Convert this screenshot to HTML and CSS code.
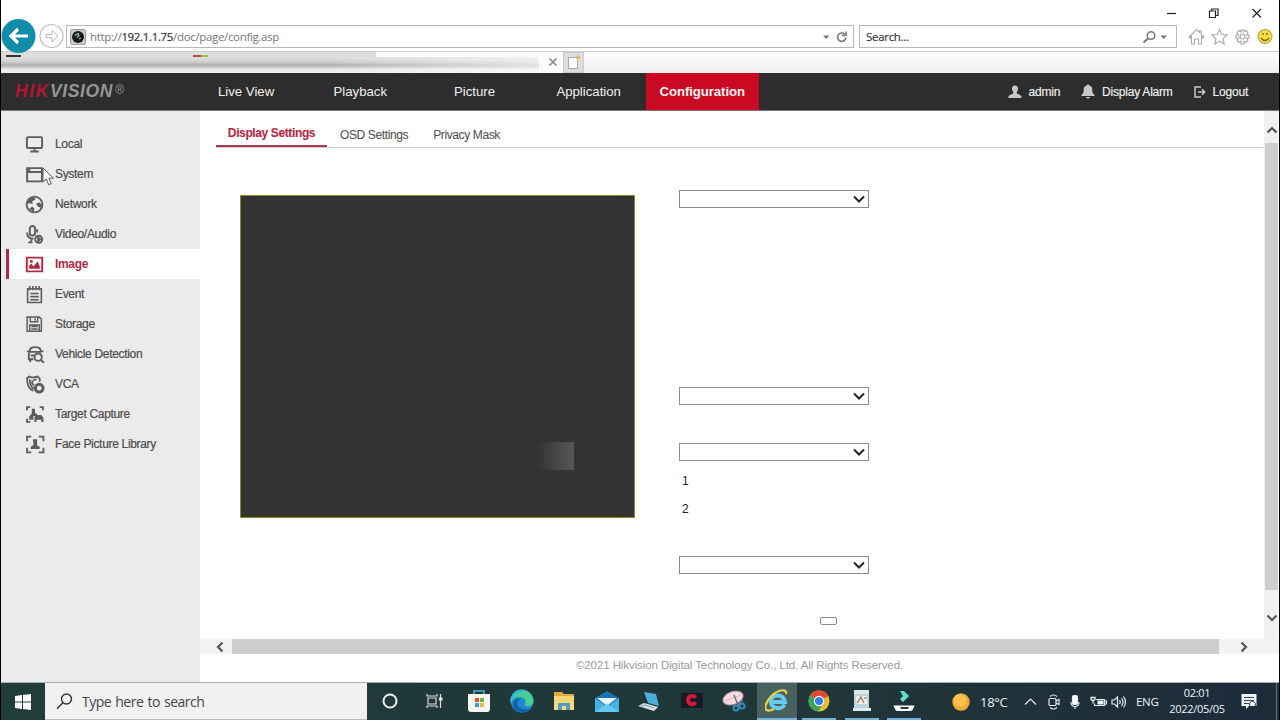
FILE: index.html
```html
<!DOCTYPE html>
<html lang="en">
<head>
<meta charset="utf-8">
<title>Configuration</title>
<link rel="stylesheet" href="styles.css">
</head>
<body>
<div class="screen">
  <header class="titlebar">
    <svg class="win-controls" width="120" height="26" viewBox="0 0 120 26" fill="none" stroke="#222" stroke-width="1.2"><path d="M7 13.500h9"/><path d="M49.500 11h6v6.500h-6zM51.500 11V9h6.500v6.500h-2.500"/><path d="M92.500 9l8.500 8.500M101 9l-8.500 8.500"/></svg>
  </header>
  <div class="address-row">
    <svg class="nav-buttons" width="65" height="34" viewBox="0 0 65 34"><circle cx="17.500" cy="16" r="17" fill="#118daa"/><path d="M27 16H10M17 9l-7 7 7 7" fill="none" stroke="#fff" stroke-width="3.200"/><circle cx="50.500" cy="16" r="11.500" fill="#fff" stroke="#bbb" stroke-width="1.200"/><path d="M45 14.500h6v-4l6 5.700-6 5.700v-4h-6z" fill="none" stroke="#b5b5b5"/></svg>
    <div class="url-box">
      <svg width="16" height="16" viewBox="0 0 16 16"><rect x=".5" y=".5" width="15" height="15" rx="2" fill="#ccc" stroke="#999"/><circle cx="8" cy="8" r="6" fill="#171b1c"/><path d="M5 6.500l3-2 1 2-2 2M9 10l2-1" stroke="#a6b1b3" fill="none" stroke-width="1.300"/></svg>
      <span class="url">http://<b>192.1.1.75</b>/doc/page/config.asp</span>
      <svg class="end" width="30" height="16" viewBox="0 0 30 16"><path d="M0 6.500h6.500L3.200 10z" fill="#777"/><path d="M21.800 5.200a4.200 4.200 0 1 0 1.200 3.300M23 2.500v4h-4" fill="none" stroke="#777" stroke-width="1.600"/></svg>
    </div>
    <div class="search-box"><span>Search...</span>
      <svg class="end" width="36" height="16" viewBox="0 0 36 16"><circle cx="11" cy="6.500" r="3.800" fill="none" stroke="#777" stroke-width="1.500"/><path d="M8 9.500l-4.500 4" stroke="#777" stroke-width="2"/><path d="M20.500 6.500H27L23.700 10z" fill="#777"/></svg>
    </div>
    <svg class="tools" width="86" height="18" viewBox="0 0 86 18" fill="none" stroke="#a8a8a8" stroke-width="1.100"><path d="M1 9l7.500-7.500 3 3V3H13v3l3 3-1 1-1.500-1.500V16h-3v-5H6.500v5h-3V8.500L2 10z"/><path d="M31.500 1.500l2.200 5 5.500.5-4.200 3.600 1.300 5.400-4.800-2.900-4.800 2.900 1.300-5.400-4.200-3.600 5.500-.5z"/><path d="M53 2h3v2l2-1.500 2 2L58.500 7H61v3h-2.500l1.500 2.500-2 2-2-1.500v3h-3v-3l-2 1.500-2-2 1.500-2.500H48V7h2.500L49 4.500l2-2L53 4z"/><circle cx="54.500" cy="8.500" r="2.500"/><circle cx="77" cy="8.500" r="7" fill="#f4dc45" stroke="#bda636"/><path d="M73 10q4 5 8 0M75 5v2M79 5v2" stroke="#7b6820" stroke-width="1.300"/></svg>
  </div>
  <div class="tab-strip">
    <div class="old-tabs"><i class="fav dark"></i><i class="fav colored"></i></div>
    <div class="current-tab"><svg width="10" height="10" viewBox="0 0 10 10"><path d="M1.500 1.500l7 7M8.500 1.500l-7 7" stroke="#8a8a8a" stroke-width="1.700"/></svg></div>
    <div class="new-tab"><svg width="16" height="16" viewBox="0 0 16 16"><path d="M3.500 3.500h9v11h-9z" fill="#fff" stroke="#aaa"/><path d="M12.500 0l1 2.500L16 3.500l-2.500 1L12.500 7l-1-2.500L9 3.500l2.500-1z" fill="#dab964"/></svg></div>
    <div class="tab-smudge"></div>
  </div>
  <nav class="navbar">
    <div class="logo"><span>HIK</span>VISION<sup>®</sup></div>
    <div class="menu"><a>Live View</a><a>Playback</a><a>Picture</a><a>Application</a><a class="selected">Configuration</a></div>
    <div class="account">
      <svg width="14" height="14" viewBox="0 0 14 14" fill="#c9c9c9"><path d="M7 .5c2 0 3.200 1.500 3 3.600C9.900 5.500 9.300 6.500 8.700 7v1.500c1 .8 5 1 5 4.500H.3C.3 9.500 4.300 9.300 5.300 8.500V7C4.700 6.500 4.100 5.500 4 4.100 3.800 2 5 .5 7 .5z"/></svg><span class="a1">admin</span>
      <svg width="14" height="15" viewBox="0 0 14 15" fill="#c9c9c9"><path d="M7 0l1 1.200c2.500.6 3.300 2.300 3.300 4.500 0 3 .7 4 2.200 5.300v1H.5v-1C2 9.700 2.700 8.700 2.700 5.700c0-2.200.8-3.900 3.300-4.500zM5 13h4c-.3 2-3.700 2-4 0z"/></svg><span class="a2">Display Alarm</span>
      <svg width="12" height="12" viewBox="0 0 12 12"><path d="M7 1H1v10h6M4 6h6.500M8 3.300L10.700 6 8 8.700" fill="none" stroke="#c9c9c9" stroke-width="1.500"/></svg><span>Logout</span>
    </div>
  </nav>
  <main class="main">
    <aside class="sidebar">
      <a><svg viewBox="0 0 18 18"><rect x="1.800" y="2" width="14.400" height="10.300" rx="1"/><path d="M9 12v3M5 15.700h8"/></svg>Local</a>
      <a><svg viewBox="0 0 18 18"><path d="M2 3h14v12.500H2zM2 6.700h14M3 4.800h2"/></svg>System
        <svg class="cursor" width="14" height="20" viewBox="0 0 14 20"><path d="M1 1v14l3.300-3 2.400 5.700 2.600-1.100-2.400-5.500h4.500z" fill="#fff" stroke="#555" stroke-width="1"/></svg></a>
      <a><svg viewBox="0 0 18 18"><circle cx="9" cy="9" r="7.500"/><path d="M2.500 5l6-3 1.500 2-3 2v3l-2-1.500-2.500 1zM10.500 8l3-1 2.500 2-1 3-3-1zM4 13l3-2 2 2-1 3z" fill="#5d5d5d" stroke="none"/></svg>Network</a>
      <a><svg viewBox="0 0 18 18"><rect x="4.500" y="1" width="5" height="9" rx="2.500"/><path d="M2 7c0 4 2 6 6 6M6 13v4M3 16.500h4M11.500 4v3"/><circle cx="13" cy="13.500" r="3.300"/><path d="M12.500 12l2 1.500-2 1.500z"/></svg>Video/Audio</a>
      <a class="selected"><svg viewBox="0 0 18 18"><path d="M1.700 2.500h14.600v13H1.700z"/><path d="M4 13v-3l2-2 2 3 4-5 2 5v2z" fill="#b32843" stroke="none"/><circle cx="6" cy="6" r=".6"/></svg>Image</a>
      <a><svg viewBox="0 0 18 18"><path d="M2.500 3.500h13v13h-13zM4.500 1v4M7.500 1v4M10.500 1v4M13.500 1v4M5 8h8M5 11h8M5 14h8" stroke-width="1.500"/></svg>Event</a>
      <a><svg viewBox="0 0 18 18"><path d="M2 2h11.500l2 2v11.500H2zM5 2v4.500h7V2M9.500 3v2.500M4.500 15V9.500h9V15M6 11h6M6 13.300h6" stroke-width="1.400"/></svg>Storage</a>
      <a class="shift"><svg viewBox="0 0 18 18"><path d="M3 6.500l1.500-3.500q4-2 8.500 0L14.500 6.500M1 6h2M14.500 6h2M3 6.500h11.500M2.700 7v6.500H7M4.500 10h3M4 13.500V16"/><circle cx="11.500" cy="11.500" r="3.500"/><path d="M14 14l3 3"/></svg>Vehicle Detection</a>
      <a class="shift"><svg viewBox="0 0 18 18"><path d="M7 15C2 13 1 9 1 3l2-1.500 3 1 5-1 2 2v3M3.500 4c0 5 1 7 4 9M6 5v3l1.500 2M7 5l3-1" stroke-width="1.700"/><circle cx="12.500" cy="12.500" r="3.700" stroke-width="2.800"/></svg>VCA</a>
      <a class="shift"><svg viewBox="0 0 18 18"><path d="M1 5V2h3M13 2h3v3M1 13v3h3"/><path d="M5.500 3.500h3v4l2 1v2H7V14H3v-3l2.500-3zM9 9.500h5.500L16.500 12v4h-2v-2H10v2H8v-4z" fill="#5d5d5d" stroke="none"/></svg>Target Capture</a>
      <a class="shift"><svg viewBox="0 0 18 18"><path d="M1 6V1.500h4M12 1.500h4.500V6M1 12v4.500h4M12 16.500h4.500V12"/><path d="M6.500 4h4v5.500H10l3 1.700v2H4.500v-2l2.500-1.700z" fill="#5d5d5d" stroke="none"/></svg>Face Picture Library</a>
    </aside>
    <section class="pane">
      <div class="pane-body">
        <div class="content">
          <div class="tabs"><a class="selected">Display Settings</a><a>OSD Settings</a><a>Privacy Mask</a></div>
          <div class="settings">
            <div class="preview"><div class="artifact"></div></div>
            <div class="form">
              <div class="select"><svg viewBox="0 0 12 8"><path d="M1 1.500l5 5 5-5"/></svg></div>
              <div class="select mode"><svg viewBox="0 0 12 8"><path d="M1 1.500l5 5 5-5"/></svg></div>
              <div class="select range"><svg viewBox="0 0 12 8"><path d="M1 1.500l5 5 5-5"/></svg></div>
              <div class="number">1</div>
              <div class="number">2</div>
              <div class="select last"><svg viewBox="0 0 12 8"><path d="M1 1.500l5 5 5-5"/></svg></div>
              <div class="button"></div>
            </div>
          </div>
        </div>
        <div class="vscroll"><svg viewBox="0 0 12 8"><path d="M1.500 6.500L6 2l4.500 4.500"/></svg><div class="vthumb"></div><svg viewBox="0 0 12 8"><path d="M1.500 1.500L6 6l4.500-4.500"/></svg></div>
      </div>
      <div class="hscroll"><svg viewBox="0 0 8 12"><path d="M6.500 1.500L2 6l4.500 4.500"/></svg><div class="hthumb"></div><svg viewBox="0 0 8 12"><path d="M1.500 1.500L6 6l-4.500 4.500"/></svg></div>
      <footer>©2021 Hikvision Digital Technology Co., Ltd. All Rights Reserved.</footer>
    </section>
  </main>
  <div class="taskbar">
    <div class="start"><svg width="16" height="16" viewBox="0 0 16 16" fill="#fff"><path d="M0 2l7-1v6.500H0zM8 .9L16 0v7.500H8zM0 8.500h7V15l-7-1zM8 8.500h8V16l-8-.9z"/></svg></div>
    <div class="searchbar"><svg width="17" height="17" viewBox="0 0 17 17" fill="none" stroke="#333" stroke-width="1.400"><circle cx="10.500" cy="6" r="5"/><path d="M7 9.700l-6 6"/></svg><span>Type here to search</span></div>
    <div class="apps">
      <div class="app wide"><svg viewBox="0 0 24 24"><circle cx="12" cy="12" r="6.500" fill="none" stroke="#eee" stroke-width="2"/></svg></div>
      <div class="app wide"><svg viewBox="0 0 24 24" fill="none" stroke="#ddd" stroke-width="1.200"><path d="M4 5v2h10V5M5 9h8v6H5zM4 19v-2h10v2M17.500 5v14"/><path d="M16.500 9h2.500v2h-2.500z" fill="#fff"/></svg></div>
      <div class="app"><svg viewBox="0 0 24 24"><path d="M7 6V2h10v4" fill="none" stroke="#52b5d9" stroke-width="1.500"/><path d="M1 5h22v15q0 3-3 3H4q-3 0-3-3z" fill="#f5f5f2"/><path d="M8 9h4v4H8z" fill="#e5532d"/><path d="M13 9h4v4h-4z" fill="#79af38"/><path d="M8 14h4v4H8z" fill="#3da0d4"/><path d="M13 14h4v4h-4z" fill="#eab83c"/></svg></div>
      <div class="app"><svg viewBox="0 0 24 24"><circle cx="12" cy="12" r="11.500" fill="#2385cf"/><path d="M2 7C6-2 22-1 23.500 12c0 5-7 7-9 4 3-3 0-8-5-8S2 11 1 14Q0 10 2 7z" fill="#47cf92"/><path d="M2 6C6 0 13-1 18 3 10 1 4 6 1 14Q-.5 10 2 6z" fill="#35b8d5"/><path d="M8 12c-2 6 4 10 12 8-7 6-17 3-17-5 0-4 4-6 7-5z" fill="#1261ad"/></svg></div>
      <div class="app"><svg viewBox="0 0 24 24"><path d="M2 3h8l2 2h10v16H2z" fill="#dfa93b"/><path d="M2 7h20v14H2z" fill="#f7d778"/><path d="M6 21v-7h12v7h-4v-4h-4v4z" fill="#4c9fc8"/></svg></div>
      <div class="app"><svg viewBox="0 0 24 24"><path d="M0 9l12-7 12 7v14H0z" fill="#1673b5"/><path d="M2 9h20l-10 8z" fill="#e5f2fa"/><path d="M0 9l12 9 12-9v14H0z" fill="#41b5e4"/><path d="M0 23l12-8 12 8z" fill="#62c9ef"/></svg></div>
      <div class="app"><svg viewBox="0 0 24 24"><path d="M7 3l12 2 3 12-11-3z" fill="#4daddd"/><path d="M1 17l6-3 14 4-4 4z" fill="#d9e3e8"/><path d="M4 17l4-1 9 3" fill="none" stroke="#859aa7"/></svg></div>
      <div class="app"><svg viewBox="0 0 24 24"><path d="M1 4h22v15H1z" fill="#151b20"/><path d="M17 7c-5-5-11-1-11 4s6 9 11 4l-2-3c-2 2-5 1-5-1s3-3 5-1z" fill="#cf173e"/></svg></div>
      <div class="app"><svg viewBox="0 0 24 24"><ellipse cx="11" cy="9" rx="10.500" ry="6.500" transform="rotate(-20 11 9)" fill="#f3dde2" stroke="#a58b95"/><path d="M3 12l16-6" stroke="#d9b4bf"/><path d="M12 6l4 10M21 11l-5 5" stroke="#777" stroke-width="1.500"/><circle cx="14" cy="19" r="2.500" fill="none" stroke="#358db8" stroke-width="2"/><circle cx="20" cy="17" r="2.500" fill="none" stroke="#358db8" stroke-width="2"/></svg></div>
      <div class="app active running"><svg viewBox="0 0 24 24"><path d="M19.500 15.500C17 21 6 20.500 6 12.500S19 4 20 13H7" fill="none" stroke="#67c9ee" stroke-width="4"/><path d="M21 5C23-1 11 0 4 10S1 24 9 20" fill="none" stroke="#e9d444" stroke-width="2.200"/></svg></div>
      <div class="app running"><svg viewBox="0 0 24 24"><circle cx="12" cy="12" r="10.500" fill="#e5bd34"/><path d="M12 12L3 6.500A10.500 10.500 0 0 1 21.500 7z" fill="#dc4937"/><path d="M12 12L3 6.500A10.500 10.500 0 0 0 11 22.400l4-6z" fill="#37a457"/><circle cx="12" cy="12" r="5.200" fill="#fff"/><circle cx="12" cy="12" r="4" fill="#377ee0"/></svg></div>
      <div class="app running"><svg viewBox="0 0 24 24"><path d="M4 1h15v20H4z" fill="#b9d6e3"/><path d="M4 1h15v4H4z" fill="#dae7ed"/><path d="M6 7h11v8H6z" fill="#edf0ee"/><path d="M7 14l4-6 3 6M14 9h3" fill="none" stroke="#b48575" stroke-width="1.500"/><path d="M3 19h18v3H3z" fill="#dceaf0"/></svg></div>
      <div class="app running"><svg viewBox="0 0 24 24"><path d="M8 2h4l5 5-6 6-3-3 3-3z" fill="#65dfcd"/><path d="M1.500 16.500h21l-1.500 3.500q-.5 2-2.500 2h-13q-2 0-2.500-2z" fill="#fff"/><path d="M8 18h9l-1 2H9z" fill="#263c48"/></svg></div>
    </div>
    <div class="tray">
      <svg width="18" height="18" viewBox="0 0 18 18"><circle cx="9" cy="9" r="8.700" fill="#f3a936"/><circle cx="8" cy="7.500" r="6.200" fill="#fac24b"/></svg>
      <span class="temp">18°C</span>
      <svg class="tray-icons" width="104" height="20" viewBox="0 0 104 20" fill="none" stroke="#e4e9eb" stroke-width="1.200"><path d="M3 12.500L8.500 7 14 12.500"/><rect x="27" y="6.500" width="7" height="7" rx="1"/><path d="M34 9l3-1.500v5L34 11M28 4.500q3.500-3 7 0M28 15.500q3.500 3 7 0"/><rect x="50.500" y="3.500" width="5" height="9" rx="1.500" fill="#fff"/><path d="M49 10c0 6 8 6 8 0M53 14.500V17"/><path d="M74 7.500h8.500v6H72.500v-2M83 9h1.500v3H83"/><path d="M76 9h5v3h-5z" fill="#fff"/><path d="M69 5.500h4v2q-2 2-4 0zM71 8.500v3" stroke-width="1.300"/><path d="M90 8h2.500l3-3v10l-3-3H90zM97.500 8q1.500 2 0 4M99.500 6q3 4 0 8M101.500 4.500q4 5.500 0 11"/></svg>
      <span class="lang">ENG</span>
      <span class="clock">02:01<br>2022/05/05</span>
      <svg class="note" width="16" height="17" viewBox="0 0 16 17"><path d="M.5 1h15v12H8l-3 3v-3H.5z" fill="#eff3f4"/><path d="M3 4.500h10M3 7.500h10M3 10.500h5" stroke="#314252" stroke-width="1.200"/><path d="M9 13a3 3 0 1 1 5 0" fill="#fff" stroke="#314252"/></svg>
    </div>
  </div>
</div>
</body>
</html>
```
FILE: styles.css
```css
* { box-sizing: border-box; }
body { margin: 0; font-family: "Liberation Sans", Arial, sans-serif; }
svg { display: block; flex: none; }
.screen { width: 1280px; height: 720px; overflow: hidden; display: flex; flex-direction: column; border-left: 1px solid #000; border-right: 1px solid #000; background: #fff; }
.titlebar { height: 20px; display: flex; justify-content: flex-end; flex: none; }
.win-controls { margin-right: -1px; }
.address-row { height: 31px; display: flex; align-items: center; flex: none; padding-top: 2px; font-family: "Open Sans", "Noto Sans", sans-serif; font-size: 11.5px; color: #333; }
.nav-buttons { position: relative; z-index: 2; overflow: visible; }
.url-box, .search-box { height: 23px; border: 1px solid #b8b8b8; display: flex; align-items: center; flex: none; }
.url-box { width: 788px; padding-left: 3px; gap: 4px; color: #777; }
.url { letter-spacing: -.34px; }
.url b { color: #333; font-weight: 400; -webkit-text-stroke: .2px #333; }
.search-box { width: 318px; margin-left: 5px; padding-left: 6px; letter-spacing: -.3px; -webkit-text-stroke: .15px #333; }
.end { margin-left: auto; }
.tools { margin-left: 11px; }
.tab-strip { height: 22px; flex: none; display: flex; border-top: 1px solid #ccc; background: linear-gradient(#fff, #eee); position: relative; }
.old-tabs { width: 375px; height: 5px; background: #ddd; display: flex; padding: 3px 0 0 5px; gap: 172px; }
.fav { width: 15px; height: 2px; background: #333; }
.fav.colored { background: linear-gradient(90deg, #c74a37 50%, #9bc34a 50%); }
.current-tab { width: 187px; padding: 5px 5px 0 0; display: flex; justify-content: flex-end; background: #fcfcfc; }
.new-tab { width: 21px; background: #ddd; border: 1px solid #ccc; padding: 1px 1px; }
.tab-smudge { position: absolute; left: 0; top: 5px; width: 538px; height: 16px; background: linear-gradient(#dedede 0, #cfcfcf 30%, #b0b0b0 50%, #bdbdbd 60%, #e8e8e8 75%, #f0f0f0); -webkit-mask-image: linear-gradient(90deg, #000 60%, rgba(0,0,0,.35)); mask-image: linear-gradient(90deg, #000 60%, rgba(0,0,0,.35)); }
.navbar { height: 38px; flex: none; display: flex; align-items: center; background: #2d2d2d; color: #f1f1f1; border-bottom: 1px solid #777; }
.logo { width: 188px; padding-left: 14px; font-size: 17.500px; font-style: italic; font-weight: 700; color: #969696; white-space: nowrap; letter-spacing: .6px; }
.logo span { color: #b91430; letter-spacing: 1.600px; }
.logo sup { font-size: 12px; line-height: 0; font-weight: 400; margin-left: 2px; vertical-align: 3px; }
.menu { display: flex; height: 37px; font-size: 13.200px; }
.menu a { width: 114.200px; display: flex; align-items: center; justify-content: center; }
.menu .selected { background: #ca0923; font-weight: 700; width: 113px; letter-spacing: -.08px; }
.account { margin-left: auto; display: flex; align-items: center; font-size: 12px; letter-spacing: -.22px; padding-right: 31px; -webkit-text-stroke: .15px #f1f1f1; }
.account svg { margin-right: 7px; }
.a1, .a2 { margin-right: 21px; }
.main { height: 571px; flex: none; display: flex; }
.sidebar { width: 199px; background: #eaebea; padding-top: 18px; color: #4c4c4c; font-size: 12px; letter-spacing: -.32px; }
.sidebar a { height: 30px; display: flex; align-items: center; padding-left: 24px; gap: 12px; position: relative; -webkit-text-stroke: .2px currentColor; }
.sidebar svg { width: 19px; height: 19px; fill: none; stroke: #5d5d5d; stroke-width: 1.800; margin-right: -1px; }
.sidebar .shift { padding-left: 25px; gap: 11px; }
.sidebar .selected { background: #fff; color: #b32843; font-weight: 700; border-left: 3px solid #b32843; margin-left: 5px; padding-left: 16px; -webkit-text-stroke: 0; }
.sidebar .selected svg { stroke: #b32843; }
.sidebar .cursor { position: absolute; width: 14px; height: 20px; left: 41px; top: 8px; z-index: 2; stroke-width: 1; }
.pane { width: 1079px; display: flex; flex-direction: column; }
.pane-body { height: 528px; display: flex; }
.content { width: 1064px; padding: 0 1px 0 16px; }
.tabs { height: 37px; display: flex; border-bottom: 1px solid #ccc; font-size: 12px; letter-spacing: -.38px; color: #555; -webkit-text-stroke: .1px currentColor; }
.tabs a { padding-top: 17px; margin-left: 25px; white-space: nowrap; }
.tabs a:nth-child(2) { margin-left: 13px; }
.tabs .selected { width: 111px; padding: 15px 0 0; margin: 0; text-align: center; color: #b32843; font-weight: 700; border-bottom: 2px solid #a13a4f; }
.settings { display: flex; }
.preview { width: 395px; height: 323px; margin: 47px 44px 0 24px; background: #333; border: 1px solid #8a8a20; position: relative; }
.artifact { position: absolute; left: 296px; top: 246px; width: 37px; height: 28px; background: linear-gradient(90deg, #333, #575855); }
.form { width: 190px; padding-top: 42px; font-size: 12px; color: #222; }
.select { width: 190px; height: 18px; border: 1px solid #8a8a8a; display: flex; justify-content: flex-end; align-items: center; padding-right: 3px; margin-bottom: 1px; }
.select svg { width: 12px; height: 8px; fill: none; stroke: #222; stroke-width: 2; }
.mode { margin-top: 179px; }
.range { margin-top: 38px; margin-bottom: 6px; }
.number { height: 28px; line-height: 28px; padding-left: 3px; }
.last { margin-top: 33px; }
.button { width: 17px; height: 8px; border: 1px solid #8a8a8a; border-radius: 2px; margin: 43px 0 0 141px; }
.vscroll { width: 14px; background: #f0f0f0; display: flex; flex-direction: column; align-items: center; justify-content: space-between; padding: 15px 0 17px; }
.vscroll svg { width: 12px; height: 8px; margin-left: 1px; }
.vscroll svg, .hscroll svg { fill: none; stroke: #555; stroke-width: 2.200; }
.vthumb { width: 13px; height: 447px; background: #cdcdcd; margin: 9px 0 auto; }
.hscroll { height: 15px; background: #f2f2f2; display: flex; align-items: center; padding-left: 16px; }
.hscroll svg { width: 8px; height: 12px; }
.hthumb { width: 987px; height: 15px; background: #cdcdcd; margin: 0 21px 0 8px; }
footer { height: 28px; text-align: center; font-size: 11.500px; letter-spacing: -.09px; line-height: 23px; color: #999; }
.taskbar { height: 38px; flex: none; display: flex; background: linear-gradient(90deg, #203d39, #203638 65%, #1d2b3b); border-top: 1px solid #a9afaf; font-family: "Open Sans", "Noto Sans", sans-serif; color: #eef2f3; }
.start { width: 44px; display: flex; align-items: center; justify-content: center; }
.searchbar { width: 322px; background: #f1f1f1; border-bottom: 1px solid #bbb; color: #444; font-size: 14px; letter-spacing: -.5px; word-spacing: 1px; display: flex; align-items: center; padding-left: 11px; gap: 9px; }
.apps { width: 560px; display: flex; }
.app { width: 34px; margin: 0 4.250px; display: flex; align-items: center; justify-content: center; border-bottom: 2px solid transparent; }
.app.wide { width: 37px; }
.app svg { width: 24px; height: 24px; }
.app.active { width: 40px; margin: 0 1.250px; background: #496260; }
.running { border-bottom-color: #73b3d9; }
.tray { margin-left: auto; width: 325px; display: flex; align-items: center; font-size: 12.500px; border-right: 1px solid #66727c; margin-right: 2px; }
.temp { width: 42px; margin-left: 10px; font-size: 13px; letter-spacing: -.3px; }
.lang { font-size: 11.500px; width: 33px; margin-left: 10px; letter-spacing: -.3px; }
.clock { width: 56px; text-align: center; font-size: 11px; letter-spacing: -.3px; line-height: 16px; padding-bottom: 2px; }
.note { margin-left: 16px; }
```
